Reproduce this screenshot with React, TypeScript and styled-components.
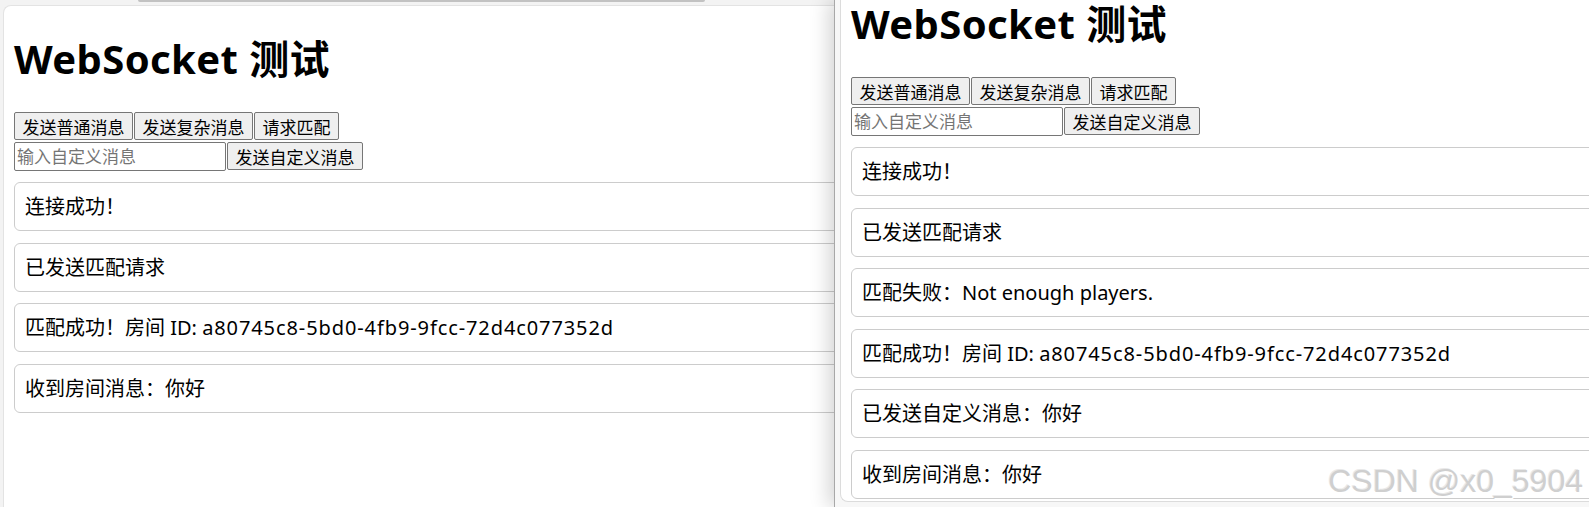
import React from 'react';
import styled, { createGlobalStyle } from 'styled-components';

const GlobalStyle = createGlobalStyle`
  html, body {
    margin: 0;
    padding: 0;
    background: #ffffff;
  }
  body {
    font-family: "Noto Sans", "Noto Sans CJK SC", sans-serif;
  }
`;

const FONT = `"Noto Sans", "Noto Sans CJK SC", sans-serif`;

type Message = { text: string; id?: string };

const ROOM_ID = 'a80745c8-5bd0-4fb9-9fcc-72d4c077352d';

const leftMessages: Message[] = [
  { text: '连接成功！' },
  { text: '已发送匹配请求' },
  { text: '匹配成功！房间 ID: ', id: ROOM_ID },
  { text: '收到房间消息：你好' },
];

const rightMessages: Message[] = [
  { text: '连接成功！' },
  { text: '已发送匹配请求' },
  { text: '匹配失败：Not enough players.' },
  { text: '匹配成功！房间 ID: ', id: ROOM_ID },
  { text: '已发送自定义消息：你好' },
  { text: '收到房间消息：你好' },
];

const S = {
  Desktop: styled.div`
    position: relative;
    width: 1589px;
    height: 507px;
    overflow: hidden;
    background: #ffffff;
  `,
  LeftWindow: styled.div`
    position: absolute;
    left: 0;
    top: 0;
    width: 860px;
    height: 507px;
    display: flex;
    flex-direction: column;
    background: #f3f3f3;
  `,
  TopStrip: styled.div`
    height: 5px;
    flex-shrink: 0;
  `,
  StripBar: styled.div`
    margin-left: 138px;
    width: 567px;
    height: 2px;
    border-radius: 0 0 2px 2px;
    background: #c2c2c2;
  `,
  LeftPanel: styled.div`
    flex: 1;
    margin-left: 3px;
    background: #ffffff;
    border-top: 1px solid #e3e3e3;
    border-left: 1px solid #e3e3e3;
    border-top-left-radius: 8px;
    overflow: hidden;
  `,
  RightWindow: styled.div`
    position: absolute;
    left: 834px;
    top: 0;
    width: 755px;
    height: 507px;
    display: flex;
    flex-direction: column;
    background: #f7f7f7;
    border-left: 1px solid #a8a8a8;
    box-shadow: -6px 0 18px rgba(0, 0, 0, 0.16);
  `,
  RightPanel: styled.div`
    height: 501px;
    margin-left: 5px;
    background: #ffffff;
    border-left: 1px solid #dcdcdc;
    border-bottom: 1px solid #dcdcdc;
    border-bottom-left-radius: 8px;
    overflow: hidden;
  `,
  Page: styled.div<{ $top: number }>`
    padding: ${({ $top }) => $top}px 0 0 10px;
    font-family: ${FONT};
    color: #000000;
  `,
  Title: styled.h1`
    margin: 0 0 30.5px 0;
    font-size: 40px;
    font-weight: 700;
    line-height: 46px;
    letter-spacing: 0.4px;
    white-space: nowrap;
  `,
  ButtonRow: styled.div`
    display: flex;
    gap: 1px;
    margin-bottom: 2px;
  `,
  Button: styled.button`
    height: 28px;
    padding: 0 7.5px;
    font-family: ${FONT};
    font-size: 17px;
    color: #000000;
    background: #efefef;
    border: 1px solid #767676;
    border-radius: 2px;
    white-space: nowrap;
  `,
  Input: styled.input`
    width: 206px;
    height: 27px;
    padding: 0 2px;
    font-family: ${FONT};
    font-size: 17px;
    border: 1px solid #767676;
    border-radius: 2px;

    &::placeholder {
      color: #757575;
    }
  `,
  List: styled.div`
    display: flex;
    flex-direction: column;
    gap: 11.5px;
    margin-top: 11px;
    width: 1200px;
  `,
  Message: styled.div`
    padding: 10px;
    height: 27px;
    line-height: 27px;
    font-size: 20px;
    border: 1px solid #cccccc;
    border-radius: 6px;
    white-space: nowrap;
  `,
  RoomId: styled.span`
    letter-spacing: 0.9px;
  `,
  Watermark: styled.div`
    position: absolute;
    right: 6px;
    bottom: 7px;
    font-family: "Liberation Sans", Arial, sans-serif;
    font-size: 32px;
    color: #cfcfcf;
    text-shadow: 1px 1px 0 #ffffff, -1px -1px 0 #e9e9e9;
  `,
};

const TestPage = ({ top, messages }: { top: number; messages: Message[] }) => (
  <S.Page $top={top}>
    <S.Title>WebSocket 测试</S.Title>
    <S.ButtonRow>
      <S.Button>发送普通消息</S.Button>
      <S.Button>发送复杂消息</S.Button>
      <S.Button>请求匹配</S.Button>
    </S.ButtonRow>
    <S.ButtonRow>
      <S.Input placeholder="输入自定义消息" />
      <S.Button>发送自定义消息</S.Button>
    </S.ButtonRow>
    <S.List>
      {messages.map(({ text, id }, index) => (
        <S.Message key={index}>
          {text}
          {id && <S.RoomId>{id}</S.RoomId>}
        </S.Message>
      ))}
    </S.List>
  </S.Page>
);

const App = () => (
  <>
    <GlobalStyle />
    <S.Desktop>
      <S.LeftWindow>
        <S.TopStrip>
          <S.StripBar />
        </S.TopStrip>
        <S.LeftPanel>
          <TestPage top={29.5} messages={leftMessages} />
        </S.LeftPanel>
      </S.LeftWindow>
      <S.RightWindow>
        <S.RightPanel>
          <TestPage top={0.5} messages={rightMessages} />
        </S.RightPanel>
      </S.RightWindow>
      <S.Watermark>CSDN @x0_5904</S.Watermark>
    </S.Desktop>
  </>
);

export default App;
